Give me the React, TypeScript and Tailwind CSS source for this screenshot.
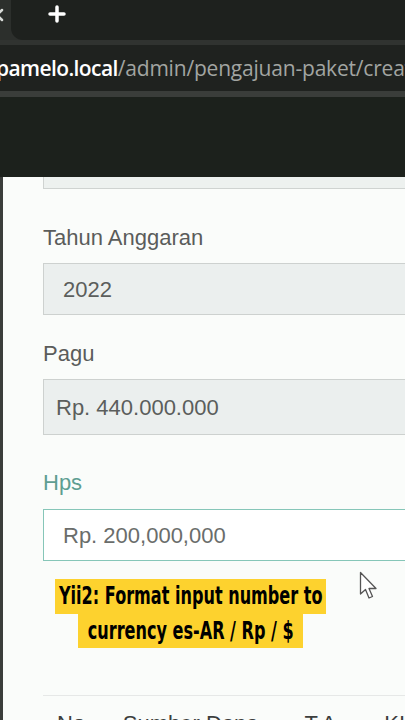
import { FiX, FiPlus } from "react-icons/fi";

const fieldCls =
  "w-[400px] border flex items-center text-[22px] text-[#5b5e5c] shrink-0";

export default function App() {
  return (
    <div className="w-[405px] h-[720px] overflow-hidden bg-[#1c211c] font-[family-name:'Liberation_Sans',Arial,sans-serif] relative">
      {/* tab strip */}
      <div className="h-[40px] flex bg-[#2c2f2c]">
        <div className="w-[24px] flex items-start pt-[5px] text-[#d9dcd9] -ml-[13px]">
          <FiX size={20} strokeWidth={3} />
        </div>
        <div className="flex-1 bg-[#1e211e] rounded-bl-[12px] flex items-start pl-[34px] pt-[2px] text-white">
          <FiPlus size={24} strokeWidth={3.5} />
        </div>
      </div>
      {/* toolbar */}
      <div className="h-[5px] bg-[#303330]" />
      <div className="h-[46px] bg-[#1f221f] flex items-center whitespace-nowrap text-[21px] -ml-[4px] pt-[2px] font-[family-name:'Open_Sans',sans-serif]">
        <span className="text-white font-semibold tracking-[-0.6px]">pamelo.local</span>
        <span className="text-[#a2a5a2] tracking-[-0.2px]">/admin/pengajuan-paket/create</span>
      </div>
      <div className="h-[6px] bg-[#3a3d3a]" />
      <div className="h-[80px] bg-[#1c211c]" />

      {/* page */}
      <div className="flex h-[600px]">
        <div className="w-[3px] bg-[#3b3d3b]" />
        <div className="flex-1 bg-[#fafcfa] pl-[40px] flex flex-col overflow-hidden">
          <div className="h-[12px] w-[400px] shrink-0 bg-[#edf1ef] border border-t-0 border-[#cfd3d1]" />
          <div className="mt-[36px] text-[22px] text-[#5a5c5b] leading-[26px]">Tahun Anggaran</div>
          <div className={fieldCls + " mt-[12px] h-[52px] bg-[#ebefee] border-[#cdd1cf] pl-[19px]"}>2022</div>
          <div className="mt-[26px] text-[22px] text-[#5a5c5b] leading-[26px]">Pagu</div>
          <div className={fieldCls + " mt-[12px] h-[56px] bg-[#ebefee] border-[#cdd1cf] pl-[12px]"}>
            Rp. 440.000.000
          </div>
          <div className="mt-[35px] text-[22px] text-[#5e9e92] leading-[26px]">Hps</div>
          <div className={fieldCls + " mt-[13px] h-[52px] bg-white border-[#86c6b8] pl-[19px] text-[#6a6d6b]"}>
            Rp. 200,000,000
          </div>
          <div className="mt-[134px] h-px w-[400px] shrink-0 bg-[#e6e8e7]" />
          <div className="mt-[11px] flex text-[22px] text-[#3c3e3d] whitespace-nowrap">
            <span className="ml-[14px] w-[66px]">No</span>
            <span className="w-[182px]">Sumber Dana</span>
            <span className="w-[80px]">T.A</span>
            <span>KI</span>
          </div>
        </div>
      </div>

      {/* video caption overlay */}
      <div className="absolute left-[55px] top-[579px] w-[271px] flex flex-col items-center whitespace-nowrap font-[family-name:'DejaVu_Sans',sans-serif] font-bold text-[24px] leading-[35px] text-black">
        <div className="bg-[#fdd22e] w-[271px] h-[35px] flex justify-center">
          <span className="inline-block shrink-0 [transform:scaleX(0.67)]">Yii2: Format input number to</span>
        </div>
        <div className="bg-[#fdd22e] w-[225px] h-[34px] flex justify-center">
          <span className="inline-block shrink-0 [transform:scaleX(0.67)]">currency es-AR / Rp / $</span>
        </div>
      </div>

      {/* mouse pointer */}
      <svg className="absolute left-[359px] top-[571px]" width="22" height="32" viewBox="0 0 22 32">
        <path
          d="M1.5 1.5 L1.5 23 L6.5 18.5 L10 27 L13.5 25.5 L10 17.5 L17 17.5 Z"
          fill="#ffffff"
          stroke="#555"
          strokeWidth="1.3"
          strokeLinejoin="round"
        />
      </svg>
    </div>
  );
}
